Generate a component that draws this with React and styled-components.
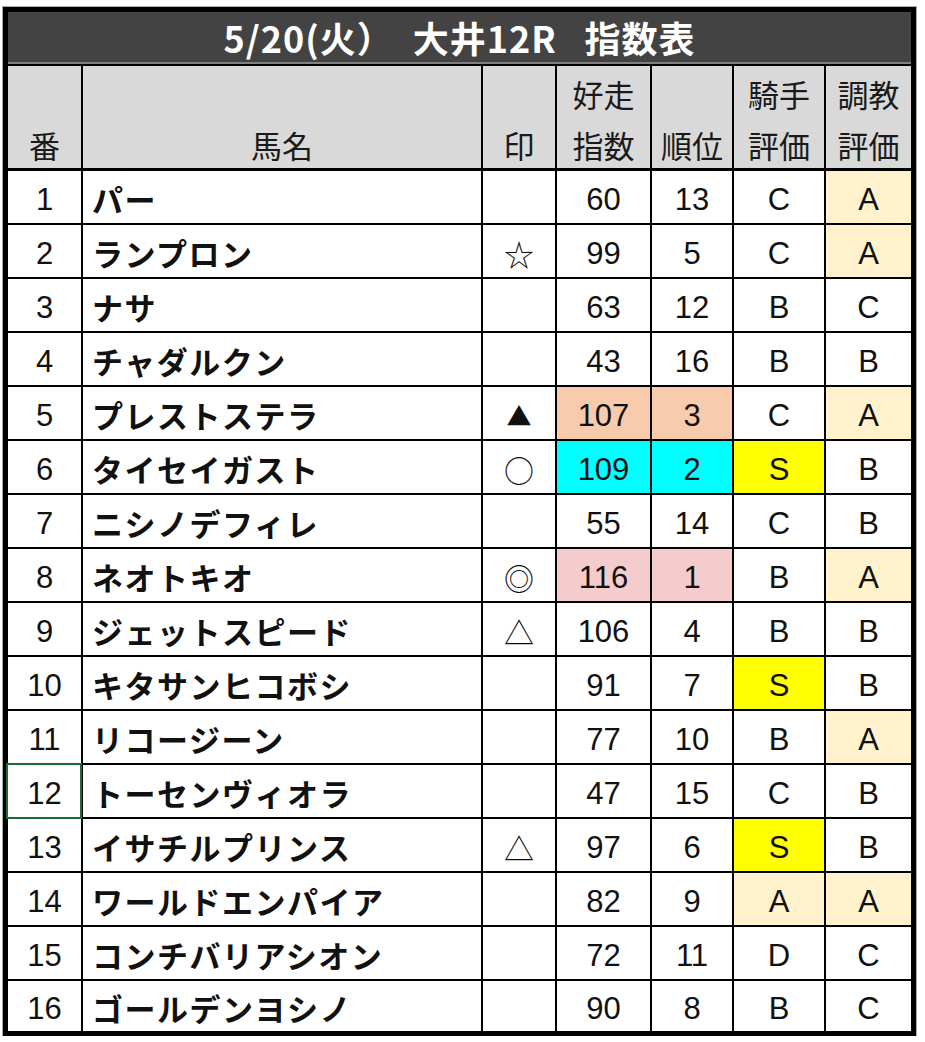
import styled, { createGlobalStyle } from "styled-components"

const GlobalStyle = createGlobalStyle`
    body {
        margin: 0;
        background-color: #ffffff;
    }
`

const COLS = "75px 400px 74px 95px 82px 92px 85px"

const Page = styled.div`
    padding: 7px 0 0 3px;
`

const Sheet = styled.div`
    width: 913px;
    box-sizing: border-box;
    border: 5px solid #000;
    box-shadow: 0 0 0 1px #aaa;
    background-color: #fff;
`

const Title = styled.div`
    height: 54px;
    box-sizing: border-box;
    background-color: #434343;
    border-bottom: 2px solid #000;
    box-shadow: inset 0 -2px 0 #808080;
    display: flex;
    align-items: center;
    justify-content: center;
    padding-bottom: 2px;
    color: #fff;
    font-family: "Noto Sans CJK JP", sans-serif;
    font-weight: 700;
    font-size: 36px;
    white-space: pre;
    letter-spacing: 1px;
`

const HeaderRow = styled.div`
    display: grid;
    grid-template-columns: ${COLS};
    height: 105px;
    box-sizing: border-box;
    border-bottom: 3px solid #000;
    background-color: #d9d9d9;
`

const HeadCell = styled.div`
    display: grid;
    grid-template-rows: 52px 50px;
    border-right: ${props => props.last ? 'none' : '2px solid #000'};
    font-family: "Noto Sans CJK JP", sans-serif;
    font-size: 31px;
    color: #1a1a1a;

    span {
        display: flex;
        align-items: center;
        justify-content: center;
        padding-top: 2px;
    }
`

const Row = styled.div`
    display: grid;
    grid-template-columns: ${COLS};
    height: ${props => props.last ? '50px' : '54px'};
    box-sizing: border-box;
    border-bottom: ${props => props.last ? 'none' : '2px solid #000'};
`

const Cell = styled.div`
    display: flex;
    align-items: center;
    justify-content: ${props => props.left ? 'flex-start' : 'center'};
    padding: ${props => props.left ? '4px 0 0 9px' : '6px 0 0 0'};
    background-color: ${props => props.bg || 'transparent'};
    border-right: ${props => props.last ? 'none' : '2px solid #000'};
    font-family: "Liberation Sans", Arial, sans-serif;
    font-size: 31px;
    color: #111;
    position: relative;
`

const SelectedCell = styled(Cell)`
    z-index: 2;

    &::after {
        content: "";
        position: absolute;
        top: -2px;
        left: -2px;
        right: -1px;
        bottom: -2px;
        border: 2px solid #1d6b3c;
        pointer-events: none;
    }
`

const NameCell = styled(Cell)`
    font-family: "Noto Sans CJK JP", sans-serif;
    font-weight: 700;
    font-size: 31px;
    letter-spacing: 1.5px;
    padding-top: 2px;
`

const MarkCell = styled(Cell)`
    font-family: "Noto Sans CJK JP", "DejaVu Sans", sans-serif;
    font-size: ${props => props.small ? '25px' : '30px'};
    padding-top: 4px;
`

const RANK_BG = { 1: '#f4cccc', 2: '#00ffff', 3: '#f8cbad' }
const GRADE_BG = { S: '#ffff00', A: '#fff2cc' }

const horses = [
    [1, 'パー', '', 60, 13, 'C', 'A'],
    [2, 'ランプロン', '☆', 99, 5, 'C', 'A'],
    [3, 'ナサ', '', 63, 12, 'B', 'C'],
    [4, 'チャダルクン', '', 43, 16, 'B', 'B'],
    [5, 'プレストステラ', '▲', 107, 3, 'C', 'A'],
    [6, 'タイセイガスト', '○', 109, 2, 'S', 'B'],
    [7, 'ニシノデフィレ', '', 55, 14, 'C', 'B'],
    [8, 'ネオトキオ', '◎', 116, 1, 'B', 'A'],
    [9, 'ジェットスピード', '△', 106, 4, 'B', 'B'],
    [10, 'キタサンヒコボシ', '', 91, 7, 'S', 'B'],
    [11, 'リコージーン', '', 77, 10, 'B', 'A'],
    [12, 'トーセンヴィオラ', '', 47, 15, 'C', 'B'],
    [13, 'イサチルプリンス', '△', 97, 6, 'S', 'B'],
    [14, 'ワールドエンパイア', '', 82, 9, 'A', 'A'],
    [15, 'コンチバリアシオン', '', 72, 11, 'D', 'C'],
    [16, 'ゴールデンヨシノ', '', 90, 8, 'B', 'C'],
]

const headers = [
    ['', '番'],
    ['', '馬名'],
    ['', '印'],
    ['好走', '指数'],
    ['', '順位'],
    ['騎手', '評価'],
    ['調教', '評価'],
]

const App = () => {
    return (
        <Page>
            <GlobalStyle />
            <Sheet>
                <Title>{'5/20(火）\u3000大井12R   指数表'}</Title>
                <HeaderRow>
                    {headers.map(([top, bottom], i) => (
                        <HeadCell key={i} last={i === headers.length - 1}>
                            <span>{top}</span>
                            <span>{bottom}</span>
                        </HeadCell>
                    ))}
                </HeaderRow>
                {horses.map(([no, name, mark, score, rank, jockey, training], i) => {
                    const NoCell = no === 12 ? SelectedCell : Cell
                    return (
                        <Row key={no} last={i === horses.length - 1}>
                            <NoCell>{no}</NoCell>
                            <NameCell left>{name}</NameCell>
                            <MarkCell small={mark === '▲'}>{mark}</MarkCell>
                            <Cell bg={RANK_BG[rank]}>{score}</Cell>
                            <Cell bg={RANK_BG[rank]}>{rank}</Cell>
                            <Cell bg={GRADE_BG[jockey]}>{jockey}</Cell>
                            <Cell bg={GRADE_BG[training]} last>{training}</Cell>
                        </Row>
                    )
                })}
            </Sheet>
        </Page>
    )
}

export default App
